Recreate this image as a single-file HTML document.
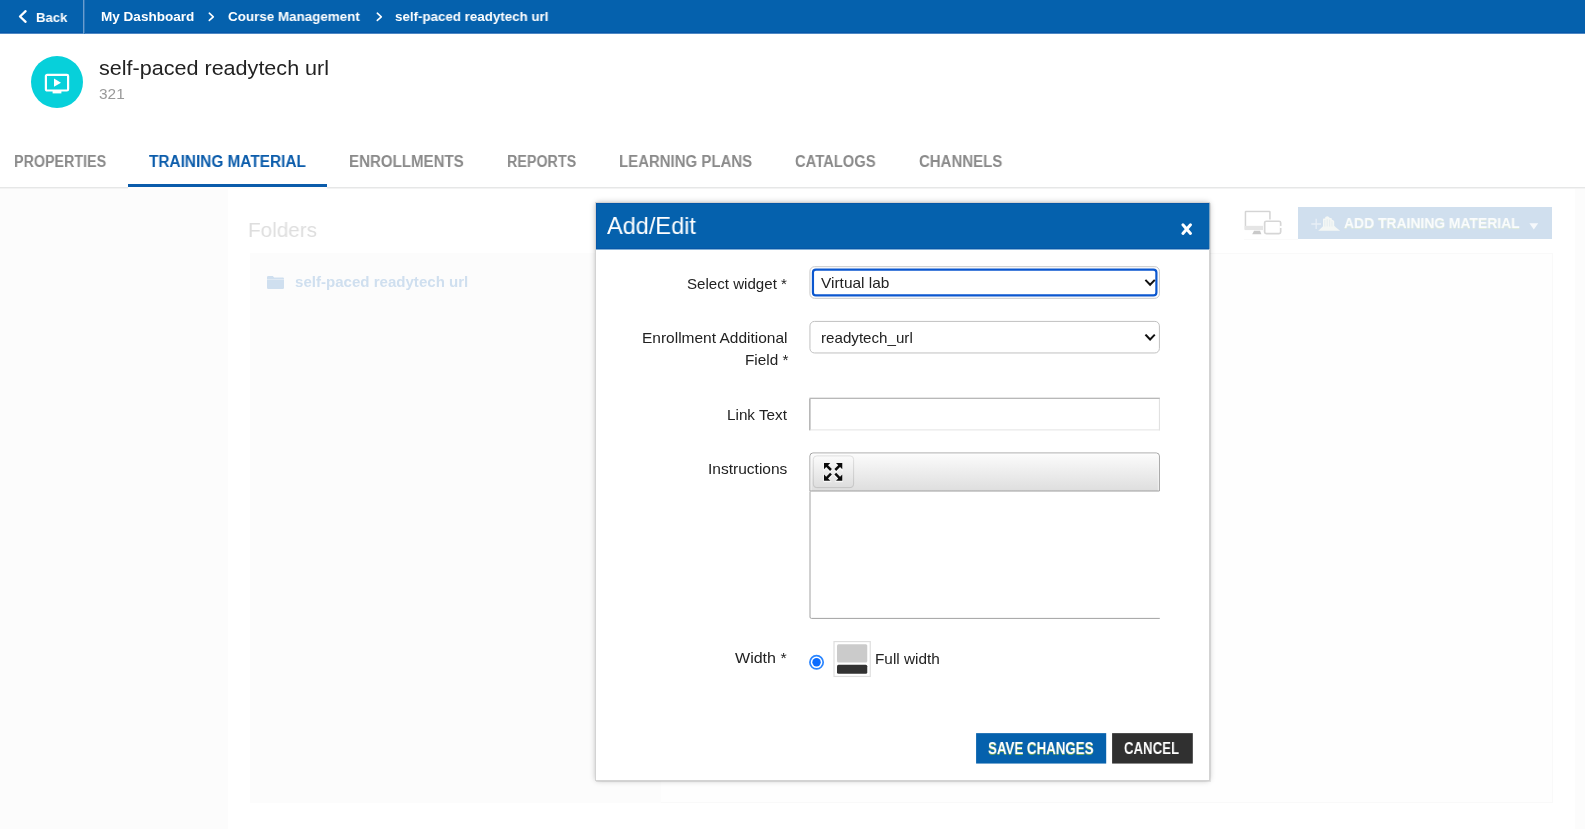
<!DOCTYPE html>
<html>
<head>
<meta charset="utf-8">
<title>Course Management</title>
<style>
*{box-sizing:border-box;margin:0;padding:0}
html,body{width:1585px;height:829px;overflow:hidden;background:#fff}
body{font-family:"Liberation Sans",sans-serif;position:relative;color:#222}
.abs{position:absolute;white-space:nowrap}
.tx{position:absolute;white-space:nowrap;display:block;line-height:normal;transform-origin:0 0;will-change:transform}
</style>
</head>
<body>

<!-- top bar -->
<div class="abs" id="topbar" style="left:0;top:0;width:1585px;height:34px;background:#0561ad"></div>
<div class="abs" style="left:0;top:32px;width:1585px;height:1px;background:#0557a9"></div>
<div class="abs" style="left:0;top:33px;width:1585px;height:1px;background:#4d89c4"></div>
<div class="abs" id="sep" style="left:83px;top:0;width:1px;height:34px;background:#6a9dce"></div>
<div class="abs" style="left:84px;top:0;width:1px;height:34px;background:#2f77b9"></div>
<svg class="abs" style="left:16px;top:9px" width="13" height="15" viewBox="0 0 13 15"><path d="M9.6 2.2 L4 7.5 L9.6 12.8" fill="none" stroke="#fff" stroke-width="2.3" stroke-linecap="round" stroke-linejoin="round"/></svg>
<div class="tx" id="tb1" style="left:36.10px;top:9.71px;font-size:13.5px;transform:scaleX(0.9727);color:#fff;font-weight:bold">Back</div>
<div class="tx" id="tb2" style="left:101.08px;top:8.80px;font-size:13.5px;transform:scaleX(1.0030);color:#fff;font-weight:bold">My Dashboard</div>
<svg class="abs" style="left:207px;top:11px" width="9" height="12" viewBox="0 0 9 12"><path d="M2.3 2.2 L6.3 5.8 L2.3 9.4" fill="none" stroke="#fff" stroke-width="1.6" stroke-linecap="round" stroke-linejoin="round"/></svg>
<div class="tx" id="tb3" style="left:228.25px;top:8.80px;font-size:13.5px;transform:scaleX(0.9931);color:#fff;font-weight:bold">Course Management</div>
<svg class="abs" style="left:374.5px;top:11px" width="9" height="12" viewBox="0 0 9 12"><path d="M2.3 2.2 L6.3 5.8 L2.3 9.4" fill="none" stroke="#fff" stroke-width="1.6" stroke-linecap="round" stroke-linejoin="round"/></svg>
<div class="tx" id="tb4" style="left:395.43px;top:8.80px;font-size:13.5px;transform:scaleX(0.9884);color:#fff;font-weight:bold">self-paced readytech url</div>

<!-- course title -->
<div class="abs" id="circle" style="left:31px;top:56px;width:52px;height:52px;border-radius:50%;background:#07d0da"></div>
<svg class="abs" style="left:44px;top:72.5px" width="26" height="21" viewBox="0 0 26 21">
  <rect x="1.9" y="1.9" width="22.2" height="15.6" rx="1.2" fill="none" stroke="#fff" stroke-width="2.2"/>
  <rect x="8.6" y="18" width="8.8" height="2.4" fill="#fff"/>
  <path d="M10 5.6 L17 9.7 L10 13.8 Z" fill="#fff"/>
</svg>
<div class="tx" id="title" style="left:99.31px;top:56.21px;font-size:20.5px;transform:scaleX(1.0516);color:#222">self-paced readytech url</div>
<div class="tx" id="code" style="left:99.43px;top:86.41px;font-size:14.5px;transform:scaleX(1.0619);color:#999">321</div>

<!-- tabs -->
<div class="tx" id="t1" style="left:14.17px;top:152.80px;font-size:16px;transform:scaleX(0.8938);color:#8a8a8a;font-weight:bold">PROPERTIES</div>
<div class="tx" id="t2" style="left:148.76px;top:152.80px;font-size:16px;transform:scaleX(0.9605);color:#0b5cab;font-weight:bold">TRAINING MATERIAL</div>
<div class="tx" id="t3" style="left:349.38px;top:152.80px;font-size:16px;transform:scaleX(0.9429);color:#8a8a8a;font-weight:bold">ENROLLMENTS</div>
<div class="tx" id="t4" style="left:507.17px;top:152.80px;font-size:16px;transform:scaleX(0.8939);color:#8a8a8a;font-weight:bold">REPORTS</div>
<div class="tx" id="t5" style="left:618.70px;top:152.80px;font-size:16px;transform:scaleX(0.9360);color:#8a8a8a;font-weight:bold">LEARNING PLANS</div>
<div class="tx" id="t6" style="left:795.19px;top:152.80px;font-size:16px;transform:scaleX(0.9227);color:#8a8a8a;font-weight:bold">CATALOGS</div>
<div class="tx" id="t7" style="left:919.12px;top:152.80px;font-size:16px;transform:scaleX(0.9364);color:#8a8a8a;font-weight:bold">CHANNELS</div>
<div class="abs" id="tabline" style="left:0;top:187px;width:1585px;height:1px;background:#e6e7e7"></div>
<div class="abs" id="tabon" style="left:128px;top:184px;width:199px;height:3px;background:#0b5cab"></div>

<!-- dimmed page content -->
<div class="abs" id="leftcol" style="left:0;top:188px;width:228px;height:641px;background:#fcfcfc"></div>
<div class="abs" id="rightcol" style="left:1575px;top:188px;width:10px;height:641px;background:#fcfcfc"></div>
<div class="abs" style="left:0;top:188px;width:1585px;height:1px;background:#f3f3f3"></div>
<div class="abs" style="left:128px;top:187px;width:199px;height:2px;background:#fefdfc"></div>
<div class="abs" id="panel" style="left:250px;top:253px;width:1303px;height:550px;background:#fefefe;border:1px solid #f9f9f9"></div>
<div class="abs" id="panelL" style="left:250px;top:253px;width:411px;height:550px;background:#fcfcfc"></div>
<div class="tx" id="folders" style="left:248.37px;top:218.11px;font-size:21px;transform:scaleX(0.9863);color:#dedede">Folders</div>
<svg class="abs" style="left:267px;top:276px" width="17" height="13" viewBox="0 0 17 13"><path d="M0 1.2 Q0 0 1.2 0 L5.8 0 L7.2 1.6 L15.8 1.6 Q17 1.6 17 2.8 L17 11.8 Q17 13 15.8 13 L1.2 13 Q0 13 0 11.8 Z" fill="#cfdfef"/><rect x="0" y="3.2" width="17" height="0.8" fill="#e4edf6"/></svg>
<div class="tx" id="fname" style="left:294.84px;top:273.00px;font-size:15px;transform:scaleX(1.0040);color:#cfdfef;font-weight:bold">self-paced readytech url</div>

<svg class="abs" style="left:1244px;top:210px" width="39" height="26" viewBox="0 0 39 26">
  <rect x="0.7" y="0.7" width="26" height="19.4" rx="1.2" fill="#d4d4d4"/>
  <rect x="0.7" y="15.9" width="26" height="4.2" fill="#e5e5e5"/>
  <rect x="2.2" y="2.2" width="23" height="13.7" fill="#fff"/>
  <path d="M10 20.8 L16 20.8 L17.4 24.3 L8.2 24.3 Z" fill="#c9c9c9"/>
  <rect x="19" y="9.6" width="19.3" height="15.7" rx="2" fill="#fff"/>
  <rect x="20.65" y="11.25" width="16" height="12.4" rx="1.6" fill="#fff" stroke="#d6d6d6" stroke-width="1.7"/>
  <rect x="35.5" y="15.9" width="2.6" height="2.1" fill="#fff"/>
</svg>
<div class="abs" style="left:1244px;top:239px;width:54px;height:1px;background:#fafafa"></div>
<div class="abs" id="addbtn" style="left:1298px;top:207px;width:254px;height:32px;background:#d0dfee"></div>
<svg class="abs" style="left:1310px;top:215px" width="32" height="18" viewBox="0 0 32 18">
  <path d="M1.3 9 H11 M6.2 3.8 V14.1" stroke="#e8eff6" stroke-width="1.3" fill="none"/>
  <path d="M8.2 15.8 L11 13.2 L13 11.2 L13 4.4 Q13 3.6 13.8 3.6 L15.2 3.6 L15.2 2.6 Q15.2 1.9 15.9 1.7 L16.6 1.4 Q17.3 1.1 18 1.4 L19 1.9 Q19.6 2.2 19.6 2.9 L21 2.9 Q21.8 2.9 21.8 3.7 L21.8 4.6 L23.6 5.4 Q24.2 5.7 24.2 6.4 L24.2 10.8 L26 12.4 L30.1 15.8 Z" fill="#f4f7f5"/>
  <path d="M14.8 5 V11.5 M17.2 4.2 V11.5 M19.6 4.6 V11.5 M22 6.4 V11.5" stroke="#dfe9ee" stroke-width="0.7" fill="none"/>
</svg>
<div class="tx" id="addtx" style="left:1344.07px;top:214.11px;font-size:15px;transform:scaleX(0.9257);color:#fafcfd;font-weight:bold;text-shadow:0 1px 0 rgba(225,238,215,.8)">ADD TRAINING MATERIAL</div>
<svg class="abs" style="left:1529px;top:222.5px" width="10" height="7" viewBox="0 0 10 7"><path d="M0.4 0.3 L9.2 0.3 L4.8 6.6 Z" fill="#f6f9fc"/></svg>

<!-- modal -->
<div class="abs" id="modal" style="left:596px;top:203px;width:613px;height:577px;background:#fff;box-shadow:0 0 0 1px #d3d3d3,0 0 6px 0 rgba(0,0,0,.32)"></div>
<div class="abs" style="left:1210px;top:203px;width:1px;height:578px;background:rgba(0,0,0,.075)"></div>
<div class="abs" style="left:596px;top:781px;width:615px;height:1px;background:rgba(0,0,0,.075)"></div>
<div class="abs" id="mhead" style="left:596px;top:203px;width:613px;height:46px;background:#0561ad;border:1px solid #0557a8;border-right:0"></div>
<div class="abs" style="left:596px;top:249px;width:613px;height:1px;background:rgba(5,97,173,.5)"></div>
<div class="abs" style="left:1209px;top:203px;width:1px;height:46px;background:rgba(5,97,173,.4)"></div>
<div class="tx" id="mtitle" style="left:607.39px;top:211.61px;font-size:24px;transform:scaleX(0.9804);color:#fff">Add/Edit</div>
<svg class="abs" style="left:1179.5px;top:222.3px" width="14" height="14" viewBox="0 0 14 14"><path d="M2.9 2.8 L10.5 11.4 M10.5 2.8 L2.9 11.4" stroke="#fff" stroke-width="3" stroke-linecap="round"/></svg>

<svg class="abs" id="ctl" style="left:0;top:0" width="1585" height="829" viewBox="0 0 1585 829">
  <defs>
    <linearGradient id="gtb" x1="0" y1="0" x2="0" y2="1"><stop offset="0" stop-color="#fcfcfc"/><stop offset="1" stop-color="#dedede"/></linearGradient>
    <linearGradient id="gbt" x1="0" y1="0" x2="0" y2="1"><stop offset="0" stop-color="#fbfbfb"/><stop offset="1" stop-color="#dddddd"/></linearGradient>
    <linearGradient id="gbs" x1="0" y1="0" x2="0" y2="1"><stop offset="0" stop-color="#e0e0e0"/><stop offset="1" stop-color="#c2c2c2"/></linearGradient>
  </defs>
  <!-- select 1 (focused) -->
  <rect x="809.95" y="266.7" width="349.45" height="31.6" rx="4.5" fill="#fff" stroke="#c8c8c8" stroke-width="1"/>
  <rect x="812.95" y="269.6" width="343.45" height="25.8" rx="3" fill="none" stroke="#0b57cf" stroke-width="2.2"/>
  <path d="M1146.1 280.6 L1150.1 284.8 L1154.1 280.6" fill="none" stroke="#111" stroke-width="2" stroke-linecap="square"/>
  <!-- select 2 -->
  <rect x="809.95" y="321.4" width="349.45" height="31.56" rx="4.5" fill="#fff" stroke="#c0c0c0" stroke-width="1"/>
  <path d="M1146.1 335.3 L1150.1 339.5 L1154.1 335.3" fill="none" stroke="#111" stroke-width="2" stroke-linecap="square"/>
  <!-- text input -->
  <rect x="809.9" y="398.2" width="349.5" height="31.7" fill="#fff"/>
  <path d="M809.9 430.4 V398.9" stroke="#8a8a8a" stroke-width="1" fill="none"/>
  <path d="M809.4 398.25 H1159.9" stroke="#a0a0a0" stroke-width="1.1" fill="none"/>
  <path d="M1159.4 398.8 V430.4" stroke="#dedede" stroke-width="1" fill="none"/>
  <path d="M810.4 429.9 H1159.9" stroke="#e4e4e4" stroke-width="1" fill="none"/>
  <!-- editor toolbar -->
  <path d="M809.95 491 V456 Q809.95 453 812.95 453 H1156.35 Q1159.35 453 1159.35 456 V491 Z" fill="url(#gtb)" stroke="#9e9e9e" stroke-width="1"/>
  <path d="M810.95 490.4 V456 Q810.95 454 812.95 454 H1156.35 Q1158.35 454 1158.35 456 V490.4" fill="none" stroke="#fff" stroke-opacity=".7" stroke-width="1"/>
  <rect x="813.3" y="455.9" width="40.3" height="31.75" rx="3.5" fill="url(#gbt)" stroke="url(#gbs)" stroke-width="1"/>
  <!-- editor body -->
  <path d="M810 491.5 V617 Q810 618.4 811.4 618.4 H1159.8" fill="none" stroke="#a2a2a2" stroke-width="1"/>
</svg>
<div class="tx" id="l1" style="left:687.19px;top:274.61px;font-size:15px;transform:scaleX(1.0073);color:#222">Select widget *</div>
<div class="tx" id="s1t" style="left:820.52px;top:274.11px;font-size:15px;transform:scaleX(1.0301);color:#222">Virtual lab</div>

<div class="tx" id="l2" style="left:641.67px;top:329.11px;font-size:15px;transform:scaleX(1.0324);color:#222">Enrollment Additional</div>
<div class="tx" id="l2b" style="left:744.50px;top:350.91px;font-size:15px;transform:scaleX(1.0225);color:#222">Field *</div>
<div class="tx" id="s2t" style="left:820.98px;top:329.11px;font-size:15px;transform:scaleX(1.0096);color:#222">readytech_url</div>

<div class="tx" id="l3" style="left:726.99px;top:405.50px;font-size:15px;transform:scaleX(1.0175);color:#222">Link Text</div>

<div class="tx" id="l4" style="left:707.72px;top:460.41px;font-size:15px;transform:scaleX(1.0347);color:#222">Instructions</div>
<svg class="abs" style="left:822.9px;top:462.1px" width="20.3" height="20.7" viewBox="-1 -1 20.3 20.7">
  <g fill="#fff" fill-opacity=".75" stroke="#fff" stroke-opacity=".55" stroke-width="1.4" transform="translate(0,0.9)"><path d="M0 0 H6.3 L4.05 2.25 L7.9 6.1 L6.1 7.9 L2.25 4.05 L0 6.3 Z"/><path d="M0 0 H6.3 L4.05 2.25 L7.9 6.1 L6.1 7.9 L2.25 4.05 L0 6.3 Z" transform="translate(18.3,0) scale(-1,1)"/><path d="M0 0 H6.3 L4.05 2.25 L7.9 6.1 L6.1 7.9 L2.25 4.05 L0 6.3 Z" transform="translate(0,17.7) scale(1,-1)"/><path d="M0 0 H6.3 L4.05 2.25 L7.9 6.1 L6.1 7.9 L2.25 4.05 L0 6.3 Z" transform="translate(18.3,17.7) scale(-1,-1)"/></g>
  <g fill="#0c0c0c"><path d="M0 0 H6.3 L4.05 2.25 L7.9 6.1 L6.1 7.9 L2.25 4.05 L0 6.3 Z"/><path d="M0 0 H6.3 L4.05 2.25 L7.9 6.1 L6.1 7.9 L2.25 4.05 L0 6.3 Z" transform="translate(18.3,0) scale(-1,1)"/><path d="M0 0 H6.3 L4.05 2.25 L7.9 6.1 L6.1 7.9 L2.25 4.05 L0 6.3 Z" transform="translate(0,17.7) scale(1,-1)"/><path d="M0 0 H6.3 L4.05 2.25 L7.9 6.1 L6.1 7.9 L2.25 4.05 L0 6.3 Z" transform="translate(18.3,17.7) scale(-1,-1)"/></g>
</svg>

<div class="tx" id="l5" style="left:735.34px;top:648.91px;font-size:15px;transform:scaleX(1.0690);color:#222">Width *</div>
<svg class="abs" style="left:804px;top:636px" width="80" height="46" viewBox="804 636 80 46">
  <circle cx="816.55" cy="662.3" r="6.65" fill="#fff" stroke="#2a85ff" stroke-width="1.7"/>
  <circle cx="816.55" cy="662.3" r="4.2" fill="#0b6cff"/>
  <rect x="834" y="641.6" width="36.25" height="34.85" fill="#fff" stroke="#dedede" stroke-width="1.2"/>
  <rect x="837" y="644.2" width="30.25" height="18.3" rx="1.5" fill="#cbcbcb"/>
  <rect x="837" y="664.85" width="30.25" height="8.85" rx="1.5" fill="#323232"/>
</svg>
<div class="tx" id="fw" style="left:874.62px;top:649.61px;font-size:15px;transform:scaleX(1.0220);color:#222">Full width</div>

<svg class="abs" style="left:970px;top:730px" width="230" height="40" viewBox="970 730 230 40"><rect x="976.1" y="733.15" width="130.1" height="30.4" fill="#0561ad"/><rect x="1112.1" y="733.15" width="80.7" height="30.4" fill="#303030"/></svg>
<div class="tx" id="b1t" style="left:988.18px;top:740.41px;font-size:16px;transform:scaleX(0.8317);color:#fff;font-weight:bold;text-shadow:0 1px 0 rgba(140,190,60,.75)">SAVE CHANGES</div>
<div class="tx" id="b2t" style="left:1124.07px;top:740.41px;font-size:16px;transform:scaleX(0.8254);color:#fff;font-weight:bold">CANCEL</div>

</body>
</html>
